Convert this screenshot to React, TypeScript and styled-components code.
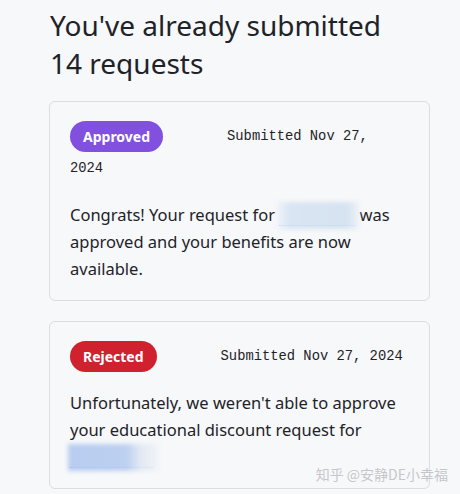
import React from "react";
import styled, { createGlobalStyle } from "styled-components";

const GlobalStyle = createGlobalStyle`
  html, body {
    margin: 0;
    padding: 0;
    background: #f6f8fa;
  }
  body {
    font-family: "Noto Sans", "Open Sans", sans-serif;
    color: #1f2328;
  }
`;

const Page = styled.div`
  width: 460px;
  height: 494px;
  overflow: hidden;
  padding: 6px 30px 0 49px;
  box-sizing: border-box;
  position: relative;
`;

const Title = styled.h1`
  font-size: 28px;
  font-weight: 400;
  line-height: 38px;
  margin: 0 0 19px 1px;
  color: #1f2328;
`;

const Card = styled.div`
  border: 1px solid #d8dee4;
  border-radius: 6px;
  background: #f6f8fa;
  padding: 18px 25px 18px 20px;
  margin-bottom: 20px;
`;

const CardHeader = styled.div`
  line-height: 30px;
  padding-bottom: 2px;
`;

const Badge = styled.span<{ $tone: "approved" | "rejected" }>`
  display: inline-block;
  vertical-align: middle;
  height: 31px;
  line-height: 31px;
  padding: 0 13px;
  border-radius: 16px;
  font-size: 14px;
  font-weight: 700;
  color: #ffffff;
  background: ${(p) => (p.$tone === "approved" ? "#8250df" : "#cf222e")};
`;

const DateText = styled.span`
  margin-left: 64px;
  font-family: "Liberation Mono", "DejaVu Sans Mono", monospace;
  font-size: 13.8px;
  vertical-align: middle;
  color: #1f2328;
`;

const Message = styled.p`
  margin: 15px 0 0;
  font-size: 16.5px;
  line-height: 27px;
  color: #1f2328;
`;

const Redacted = styled.span<{ $w: number }>`
  display: inline-block;
  position: relative;
  width: ${(p) => p.$w}px;
  height: 20px;
  vertical-align: -5px;
  border-bottom: 1px solid #0969da;
`;

const Blur = styled.span<{ $deep?: boolean }>`
  position: absolute;
  left: -2px;
  right: -4px;
  top: -3px;
  bottom: -4px;
  filter: blur(2px);
  background: ${(p) =>
    p.$deep
      ? "linear-gradient(90deg, #b8cdf0 0%, #bcd0f0 65%, #e2e9f3 80%, #f0f3f7 100%)"
      : "linear-gradient(90deg, #f0f4f8 0%, #d9e5f2 15%, #d6e3f1 85%, #eef2f7 100%)"};
`;

const Watermark = styled.div`
  position: absolute;
  right: 12px;
  bottom: 10px;
  font-family: "Noto Sans CJK SC", "Noto Sans", sans-serif;
  font-size: 14px;
  color: #c4c6ca;
  text-shadow: 0 0 1px #ffffff;
`;

export default function App() {
  return (
    <>
      <GlobalStyle />
      <Page>
        <Title>
          You've already submitted
          <br />
          14 requests
        </Title>
        <Card>
          <CardHeader>
            <Badge $tone="approved">Approved</Badge>
            <DateText>Submitted Nov 27, 2024</DateText>
          </CardHeader>
          <Message>
            Congrats! Your request for{" "}
            <Redacted $w={76}>
              <Blur />
            </Redacted>{" "}
            was approved and your benefits are now available.
          </Message>
        </Card>
        <Card>
          <CardHeader>
            <Badge $tone="rejected">Rejected</Badge>
            <DateText>Submitted Nov 27, 2024</DateText>
          </CardHeader>
          <Message>
            Unfortunately, we weren't able to approve your educational
            discount request for{" "}
            <Redacted $w={84}>
              <Blur $deep />
            </Redacted>
          </Message>
        </Card>
        <Watermark>知乎 @安静DE小幸福</Watermark>
      </Page>
    </>
  );
}
